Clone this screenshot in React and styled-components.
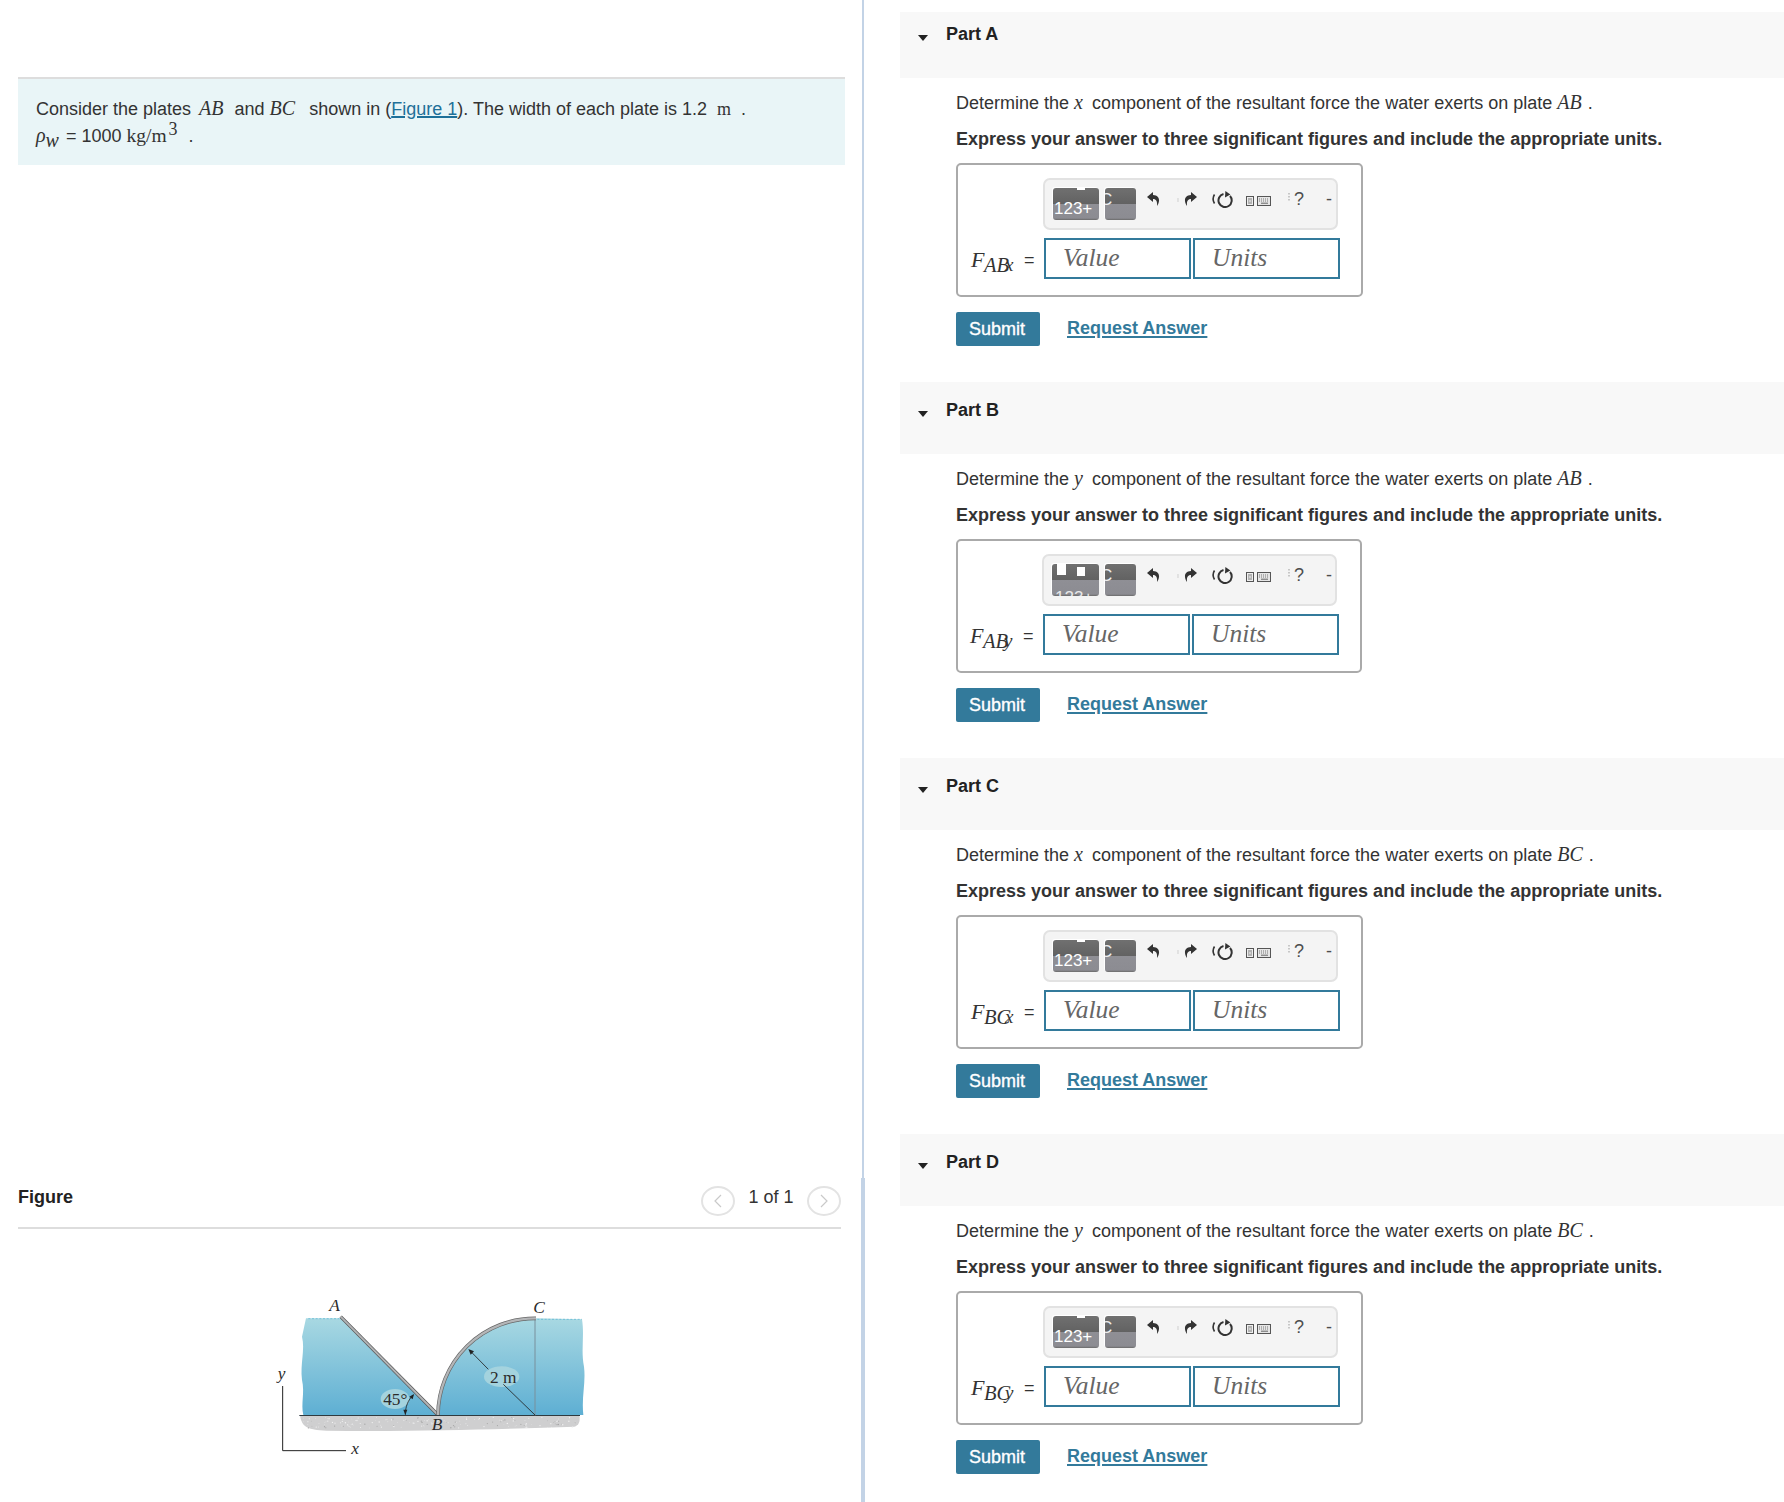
import React from "react";
import styled, { createGlobalStyle } from "styled-components";

const Global = createGlobalStyle`
  html, body { margin: 0; padding: 0; background: #fff; }
  body { font-family: "Liberation Sans", Arial, sans-serif; color: #333; }
`;

const Page = styled.div`
  display: flex;
  width: 1784px;
  height: 1502px;
  overflow: hidden;
  background: #fff;
`;
const LeftPanel = styled.div`
  width: 862px;
  flex: none;
  display: flex;
  flex-direction: column;
  padding: 77px 0 0 18px;
  box-sizing: border-box;
`;
const Divider = styled.div`
  width: 2px;
  flex: none;
  background: #c3d3e6;
  position: relative;
  &::after {
    content: "";
    position: absolute;
    top: 1178px;
    bottom: 0;
    left: -1px;
    width: 4px;
    background: #c3d3e6;
  }
`;
const Intro = styled.div`
  width: 827px;
  height: 88px;
  flex: none;
  box-sizing: border-box;
  border-top: 2px solid #dddddd;
  background: #e9f5f7;
  padding: 16px 0 0 18px;
  font-size: 18px;
  line-height: 27px;
  color: #333;
`;
const Line = styled.div`
  white-space: nowrap;
  height: 27px;
`;
const MathI = styled.span`
  font-family: "Liberation Serif", serif;
  font-style: italic;
  font-size: 20px;
  margin: 0 ${(p) => p.$r ?? 10}px 0 ${(p) => p.$l ?? 4}px;
`;
const MathR = styled.span`
  font-family: "Liberation Serif", serif;
  font-size: ${(p) => p.$size ?? 18}px;
  margin: 0 ${(p) => p.$r ?? 8}px 0 ${(p) => p.$l ?? 8}px;
`;
const Sup = styled.sup`
  font-size: 18px;
  line-height: 0;
`;
const Sub = styled.sub`
  font-size: 16px;
  line-height: 0;
`;
const Link = styled.a`
  color: #1f7099;
  text-decoration: underline;
  text-decoration-thickness: 1.5px;
`;
const FigureHead = styled.div`
  margin-top: 1012px;
  width: 823px;
  height: 52px;
  flex: none;
  box-sizing: border-box;
  border-bottom: 2px solid #dddddd;
  display: flex;
  align-items: flex-start;
  justify-content: space-between;
`;
const FigureTitle = styled.div`
  font-size: 18px;
  font-weight: 700;
  color: #222;
  line-height: 22px;
  margin-top: 9px;
`;
const Pager = styled.div`
  display: flex;
  align-items: flex-start;
  font-size: 18px;
  color: #333;
`;
const PagerText = styled.span`
  width: 72px;
  text-align: center;
  line-height: 22px;
  margin-top: 9px;
`;
const PagerButton = styled.span`
  width: 34px;
  height: 30px;
  box-sizing: border-box;
  border: 2px solid #e3e3e3;
  border-radius: 50%;
  margin-top: 9px;
  display: flex;
  align-items: center;
  justify-content: center;
`;
const FigureWrap = styled.div`
  margin: 51px 0 0 232px;
  width: 360px;
  height: 222px;
  flex: none;
`;
const RightPanel = styled.div`
  flex: 1;
  padding: 12px 0 0 36px;
  min-width: 0;
`;
const PartBlock = styled.section`
  height: ${(p) => (p.$first ? "370px" : "376.2px")};
`;
const PartHeader = styled.header`
  height: ${(p) => (p.$first ? 66 : 72)}px;
  box-sizing: border-box;
  background: #f8f8f8;
  padding: ${(p) => (p.$first ? 11 : 17)}px 0 0 18px;
  display: flex;
  align-items: flex-start;
`;
const Caret = styled.span`
  width: 0;
  height: 0;
  margin-top: 12px;
  border-left: 5.5px solid transparent;
  border-right: 5.5px solid transparent;
  border-top: 6px solid #222;
`;
const PartTitle = styled.h2`
  margin: 0 0 0 18px;
  font-size: 18px;
  line-height: 22px;
  font-weight: 700;
  color: #222;
`;
const PartBody = styled.div`
  padding: 12px 0 0 56px;
`;
const Prompt = styled.p`
  margin: 0;
  font-size: 18px;
  line-height: 24px;
  color: #333;
  white-space: nowrap;
`;
const Instruction = styled.p`
  margin: 12px 0;
  font-size: 18px;
  line-height: 24px;
  font-weight: 700;
  color: #333;
  white-space: nowrap;
`;
const AnswerBox = styled.div`
  width: ${(p) => (p.$narrow ? 406 : 407)}px;
  height: 134px;
  box-sizing: border-box;
  border: 2px solid #aaaaaa;
  border-radius: 5px;
  padding: 13px 0 0 ${(p) => (p.$narrow ? 84 : 85)}px;
`;
const Toolbar = styled.div`
  width: 295px;
  height: 52px;
  box-sizing: border-box;
  background: #f4f4f4;
  border: 2px solid #e2e2e2;
  border-radius: 7px;
  display: flex;
  align-items: flex-start;
  padding: 8px 0 0 8px;
`;
const PadButton = styled.span`
  width: ${(p) => p.$w}px;
  height: 32px;
  flex: none;
  margin-left: ${(p) => p.$ml ?? 0}px;
  position: relative;
  overflow: hidden;
  border-radius: 3px;
  background: linear-gradient(#707070 0, #626262 50%, #8f8f95 50%, #8c8c92 94%, #6a6a6a 100%);
  box-shadow: -1px -1px 0 #fff;
`;
const PadLabel = styled.span`
  position: absolute;
  left: ${(p) => p.$x}px;
  top: ${(p) => p.$y}px;
  font-size: 17px;
  line-height: 20px;
  color: ${(p) => p.$color ?? "#fff"};
  white-space: nowrap;
`;
const PadNotch = styled.span`
  position: absolute;
  left: ${(p) => p.$x}px;
  top: ${(p) => p.$y ?? 0}px;
  width: ${(p) => p.$w ?? 8}px;
  height: ${(p) => p.$h ?? 2}px;
  background: #fff;
`;
const ToolIcon = styled.svg`
  flex: none;
  margin-left: ${(p) => p.$ml}px;
  margin-top: ${(p) => p.$mt}px;
  display: block;
`;
const ToolText = styled.span`
  flex: none;
  margin-left: ${(p) => p.$ml}px;
  margin-top: ${(p) => p.$mt}px;
  font-size: 18px;
  line-height: 20px;
  color: #4d4d4d;
`;
const AnswerRow = styled.div`
  display: flex;
  margin: 8px 0 0 1px;
  gap: 2px;
  position: relative;
`;
const FieldLabel = styled.span`
  position: absolute;
  right: 100%;
  top: 0;
  width: 72px;
  margin-right: 1px;
  height: 41px;
  font-family: "Liberation Serif", serif;
  font-style: italic;
  color: #333;
  white-space: nowrap;
`;
const LabelF = styled.span`
  position: absolute;
  left: 0;
  top: 10px;
  font-size: 22px;
  line-height: 24px;
`;
const LabelSub = styled.span`
  position: absolute;
  left: ${(p) => p.$x}px;
  top: 16px;
  font-size: ${(p) => p.$size}px;
  line-height: 22px;
`;
const LabelEq = styled.span`
  position: absolute;
  left: 53px;
  top: 10px;
  font-family: "Liberation Sans", sans-serif;
  font-style: normal;
  font-size: 18px;
  line-height: 24px;
`;
const Field = styled.div`
  width: 147px;
  height: 41px;
  box-sizing: border-box;
  border: 2px solid #337a9b;
  padding-left: 17px;
  font-family: "Liberation Serif", serif;
  font-style: italic;
  font-size: 25.5px;
  line-height: 35px;
  color: #666;
`;
const Actions = styled.div`
  display: flex;
  align-items: flex-start;
  margin-top: 15px;
`;
const Submit = styled.button`
  width: 84px;
  height: 34px;
  padding: 0 2px 0 0;
  border: 0;
  border-radius: 2px;
  background: #337a9b;
  color: #fff;
  font-family: inherit;
  font-size: 18px;
  -webkit-text-stroke: 0.35px #fff;
`;
const RequestLink = styled.a`
  margin-left: 27px;
  margin-top: 4px;
  font-size: 18px;
  line-height: 24px;
  font-weight: 700;
  color: #337a9b;
  text-decoration: underline;
  text-decoration-thickness: 2px;
  text-underline-offset: 2px;
`;

const Undo = ({ ml, flip }) => (
  <ToolIcon $ml={ml} $mt={4} width="13" height="14" viewBox="0 0 13 14" style={flip ? { transform: "scaleX(-1)" } : undefined}>
    <path d="M6 0 L0 5 L6 10 V7 C9 7 10.5 9 10 14 C13 9.5 13.5 3.5 6 3 Z" fill="#333" />
  </ToolIcon>
);

const Speck = ({ ml, h = 4, mt = 10, c = "#cfcfcf", dash }) => (
  <ToolIcon $ml={ml} $mt={mt} width="2" height={h} viewBox={`0 0 2 ${h}`}>
    <path d={`M1 0 V${h}`} stroke={c} strokeWidth="1" strokeDasharray={dash} />
  </ToolIcon>
);

const Refresh = ({ ml }) => (
  <ToolIcon $ml={ml} $mt={3} width="22" height="17" viewBox="0 0 22 17">
    <path d="M2.5 3.5 C0.6 6.5 0.6 9.5 2.5 12.5" fill="none" stroke="#333" strokeWidth="1.6" />
    <path d="M11.5 3 A6.6 6.6 0 1 0 18 5" fill="none" stroke="#333" strokeWidth="2" />
    <path d="M13.4 0 L18.4 3.6 L13 6.4 Z" fill="#333" />
  </ToolIcon>
);

const Keys = ({ ml }) => (
  <ToolIcon $ml={ml} $mt={8} width="25" height="10" viewBox="0 0 25 10">
    <rect x="0.5" y="0.5" width="7" height="9" fill="#eee" stroke="#555" />
    <path d="M2 3h4M2 5h1.5M4.5 5H6M2 7h4" stroke="#777" strokeWidth="1" />
    <rect x="11.5" y="0.5" width="13" height="9" fill="#e6e6e6" stroke="#555" />
    <path d="M13 3h10M13 5h10" stroke="#777" strokeWidth="1" strokeDasharray="1 1" />
    <path d="M15 7.2h7" stroke="#666" strokeWidth="1" />
  </ToolIcon>
);

const Chevron = ({ dir }) => (
  <svg width="8" height="14" viewBox="0 0 8 14">
    <path d={dir === "l" ? "M7 1 L1 7 L7 13" : "M1 1 L7 7 L1 13"} fill="none" stroke="#c9c9c9" strokeWidth="1.2" />
  </svg>
);

const rnd = (n) => {
  const v = Math.sin(n * 12.9898) * 43758.5453;
  return v - Math.floor(v);
};
const speckles = Array.from({ length: 170 }, (_, i) => ({
  x: 160 + rnd(i + 1) * 820,
  y: 412 + rnd(i + 500) * 32,
  r: 0.9 + rnd(i + 900) * 1.2,
}));

const FigureArt = () => (
  <svg width="360" height="222" viewBox="0 0 1080 666">
    <defs>
      <linearGradient id="water" x1="0" y1="0" x2="0" y2="1">
        <stop offset="0" stopColor="#a8d8e2" />
        <stop offset="1" stopColor="#5eafd3" />
      </linearGradient>
    </defs>
    <path d="M168 115 L272 115 L560 405 L160 405 C152 370 165 340 156 300 C150 250 166 210 156 170 Z" fill="url(#water)" />
    <path d="M564 405 A291 291 0 0 1 855 115 L996 118 C1004 170 992 210 1002 260 C1008 310 994 350 1000 405 Z" fill="url(#water)" />
    <path d="M175 116 H268 M862 118 H996" stroke="#55b5d2" strokeWidth="2" strokeDasharray="6 5" />
    <path d="M150 406 H988 C992 425 985 438 972 440 C800 446 500 456 230 452 C170 450 155 440 150 406 Z" fill="#cfcfd0" />
    {speckles.map((s, i) => (
      <circle key={i} cx={s.x} cy={s.y} r={s.r} fill={i % 4 === 0 ? "#a5a5a5" : "#f2f2f2"} />
    ))}
    <path d="M148 406.5 H990" stroke="#2f3a3f" strokeWidth="3" />
    <path d="M855 118 V406" stroke="#78909c" strokeWidth="3" />
    <path d="M272 110 L561 402" stroke="#555" strokeWidth="10" />
    <path d="M272 110 L561 402" stroke="#b2b4b6" strokeWidth="6" />
    <path d="M564 405 A291 291 0 0 1 858 115" fill="none" stroke="#666" strokeWidth="11" />
    <path d="M564 405 A291 291 0 0 1 858 115" fill="none" stroke="#b4b6b8" strokeWidth="7" />
    <ellipse cx="435" cy="357" rx="43" ry="30" fill="#a4d3de" />
    <ellipse cx="755" cy="290" rx="53" ry="31" fill="#a4d3de" />
    <path d="M855 405 L760 313 M715 268 L660 212" stroke="#222" strokeWidth="2.5" fill="none" />
    <path d="M655 207 L672 214 L662 224 Z" fill="#222" />
    <path d="M466 404 C466 380 474 360 490 345" stroke="#222" strokeWidth="2.5" fill="none" />
    <path d="M492 342 L488 358 L478 350 Z M466 405 L460 389 L472 389 Z" fill="#222" />
    <path d="M98 318 V512 H288" fill="none" stroke="#222" strokeWidth="3" />
    <g fontFamily="'Liberation Serif', serif" fontSize="52" fill="#2b2b2b">
      <text x="254" y="92" fontStyle="italic" textAnchor="middle">A</text>
      <text x="867" y="99" fontStyle="italic" textAnchor="middle">C</text>
      <text x="561" y="451" fontStyle="italic" textAnchor="middle">B</text>
      <text x="95" y="298" fontStyle="italic" textAnchor="middle">y</text>
      <text x="315" y="522" fontStyle="italic" textAnchor="middle">x</text>
      <text x="436" y="374" textAnchor="middle">45°</text>
      <text x="760" y="308" textAnchor="middle">2 m</text>
    </g>
  </svg>
);

const PARTS = [
  { name: "Part A", axis: "x", plate: "AB", first: true },
  { name: "Part B", axis: "y", plate: "AB", narrow: true, altKeys: true },
  { name: "Part C", axis: "x", plate: "BC" },
  { name: "Part D", axis: "y", plate: "BC" },
];

const Part = ({ name, axis, plate, first, narrow, altKeys }) => (
  <PartBlock $first={first}>
    <PartHeader $first={first}>
      <Caret />
      <PartTitle>{name}</PartTitle>
    </PartHeader>
    <PartBody>
      <Prompt>
        Determine the <MathI $l={0} $r={4}>{axis}</MathI> component of the resultant force the water exerts on plate{" "}
        <MathI $l={0} $r={6}>{plate}</MathI>.
      </Prompt>
      <Instruction>Express your answer to three significant figures and include the appropriate units.</Instruction>
      <AnswerBox $narrow={narrow}>
        <Toolbar>
          {altKeys ? (
            <PadButton $w={47}>
              <PadNotch $x={5} $y={0} $w={9} $h={11} />
              <PadNotch $x={25} $y={3} $w={8} $h={9} />
              <PadLabel $x={3} $y={24} $color="#e8e8e8">123+</PadLabel>
            </PadButton>
          ) : (
            <PadButton $w={46}>
              <PadNotch $x={24} />
              <PadLabel $x={1} $y={11}>123+</PadLabel>
            </PadButton>
          )}
          <PadButton $w={31} $ml={6}>
            <PadLabel $x={-5} $y={2} $color="#eeeeee">C</PadLabel>
          </PadButton>
          <Undo ml={11} />
          <Speck ml={17} />
          <Undo ml={5} flip />
          <Refresh ml={15} />
          <Keys ml={12} />
          <Speck ml={17} h={9} mt={5} c="#999999" dash="1.5 1.5" />
          <ToolText $ml={4} $mt={1}>?</ToolText>
          <ToolText $ml={22} $mt={1}>-</ToolText>
        </Toolbar>
        <AnswerRow>
          <FieldLabel>
            <LabelF>F</LabelF>
            <LabelSub $x={13} $size={20.5}>{plate}</LabelSub>
            <LabelSub $x={34} $size={19}>{axis}</LabelSub>
            <LabelEq>=</LabelEq>
          </FieldLabel>
          <Field>Value</Field>
          <Field>Units</Field>
        </AnswerRow>
      </AnswerBox>
      <Actions>
        <Submit>Submit</Submit>
        <RequestLink>Request Answer</RequestLink>
      </Actions>
    </PartBody>
  </PartBlock>
);

export default function App() {
  return (
    <Page>
      <Global />
      <LeftPanel>
        <Intro>
          <Line>
            Consider the plates <MathI $l={3} $r={6}>AB</MathI> and <MathI $l={0} $r={9}>BC</MathI> shown in (
            <Link>Figure 1</Link>). The width of each plate is 1.2 <MathR $l={5} $r={5}>m</MathR> .
          </Line>
          <Line>
            <MathI $l={0} $r={0}>ρ</MathI>
            <Sub><MathI $l={0} $r={7}>w</MathI></Sub>= 1000 <MathR $l={0} $r={0} $size={19.5}>kg/m</MathR>
            <Sup><MathR $l={2} $r={6} $size={18}>3</MathR></Sup> .
          </Line>
        </Intro>
        <FigureHead>
          <FigureTitle>Figure</FigureTitle>
          <Pager>
            <PagerButton><Chevron dir="l" /></PagerButton>
            <PagerText>1 of 1</PagerText>
            <PagerButton><Chevron dir="r" /></PagerButton>
          </Pager>
        </FigureHead>
        <FigureWrap><FigureArt /></FigureWrap>
      </LeftPanel>
      <Divider />
      <RightPanel>
        {PARTS.map((p) => (
          <Part key={p.name} {...p} />
        ))}
      </RightPanel>
    </Page>
  );
}
